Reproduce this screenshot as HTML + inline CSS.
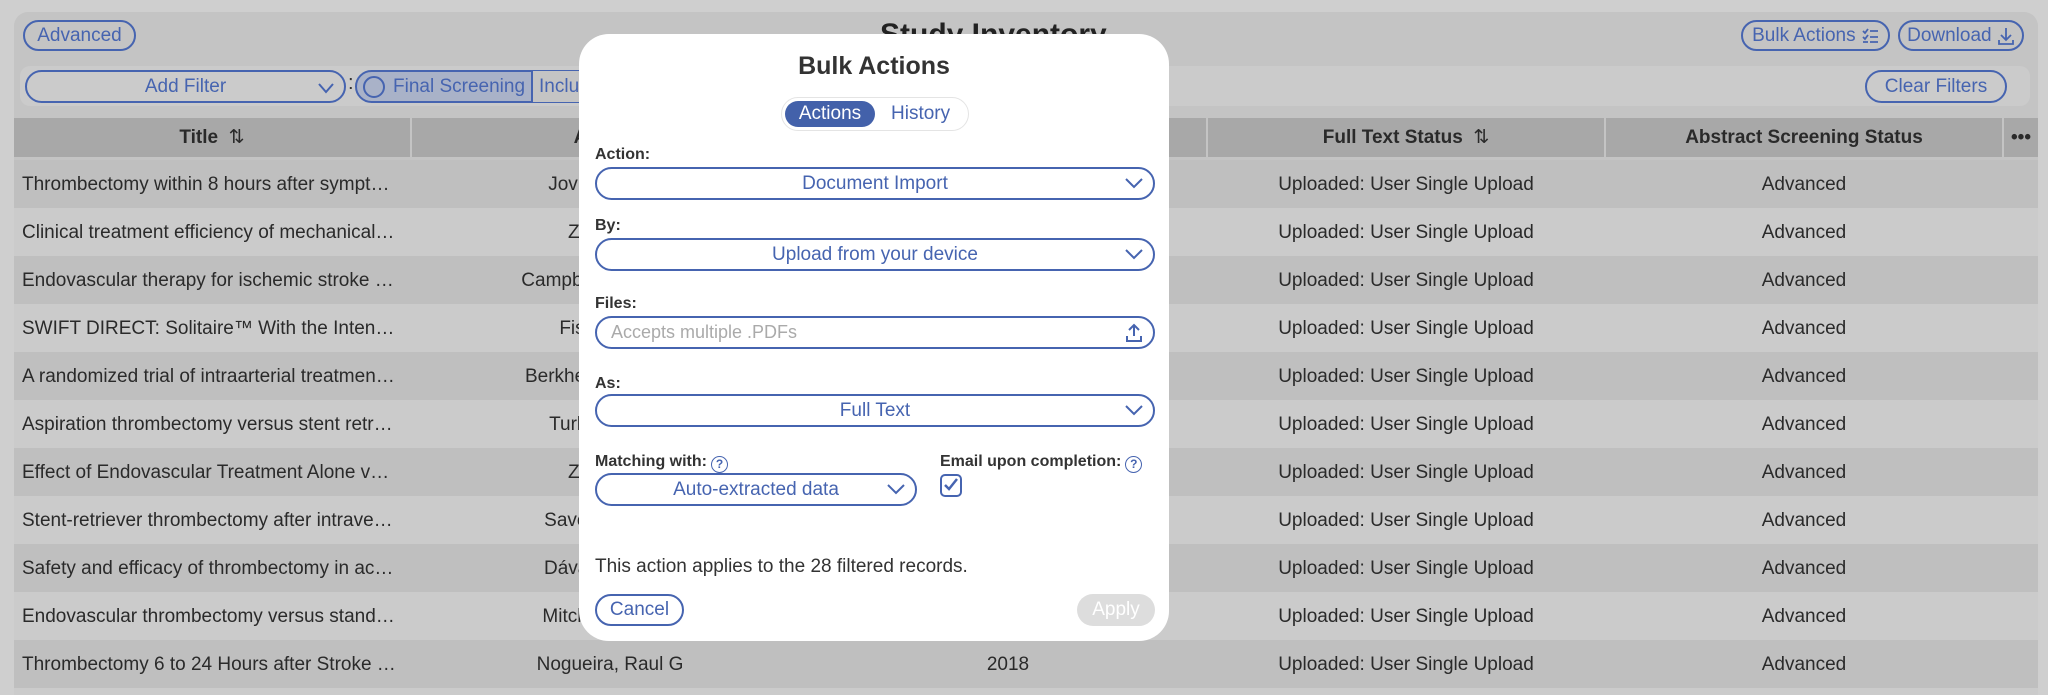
<!DOCTYPE html>
<html><head><meta charset="utf-8"><style>
*{box-sizing:border-box;margin:0;padding:0}
html,body{width:2048px;height:695px;overflow:hidden}
body{background:#cfcfcf;font-family:"Liberation Sans",sans-serif;position:relative}
.abs{position:absolute}
.panel{left:14px;top:12px;width:2024px;height:683px;background:#c4c4c4;border-radius:14px 14px 0 0}
.btn{position:absolute;border:2px solid #4664b0;border-radius:18px;color:#4664b0;font-size:19px;display:flex;align-items:center;justify-content:center;background:transparent}
.hdr{position:absolute;top:118px;height:39px;background:#a8a8a8;font-weight:bold;font-size:19px;color:#2a2a2a;display:flex;align-items:center;justify-content:center}
.row{position:absolute;left:14px;width:2024px;height:48px;font-size:19px;color:#2a2a2a;overflow:hidden}
.row span{position:absolute;top:14px}
.c2,.c3,.c4,.c5{transform:translateX(-50%);white-space:nowrap}
.modal{left:579px;top:34px;width:590px;height:607px;background:#fff;border-radius:30px}
.lab{position:absolute;font-size:16px;font-weight:bold;color:#333}
.sel{position:absolute;left:16px;width:560px;height:33px;border:2px solid #4664b0;border-radius:17px;color:#4664b0;font-size:19px;display:flex;align-items:center;justify-content:center}
.chev{position:absolute;right:10px;top:8px}
.q{display:inline-block;width:17px;height:17px;border:1.5px solid #4664b0;border-radius:50%;color:#4664b0;font-size:12px;text-align:center;line-height:14px;vertical-align:-2px;margin-left:4px}
</style></head><body>
<div class="abs panel"></div>
<div class="btn" style="left:23px;top:20px;width:113px;height:31px">Advanced</div>
<div class="abs" style="left:880px;top:18px;font-size:30px;font-weight:bold;color:#222">Study Inventory</div>
<div class="btn" style="left:1741px;top:20px;width:149px;height:31px">Bulk Actions&nbsp;<svg width="18" height="18"><path d="M2 4l2 2 3-4M2 10l2 2 3-4M9 4h8M9 10h8M9 15h8M2 15h5" fill="none" stroke="#4664b0" stroke-width="1.8"/></svg></div>
<div class="btn" style="left:1898px;top:20px;width:126px;height:31px">Download&nbsp;<svg width="18" height="20"><path d="M9 2v12M4 9l5 5 5-5M2 14v4h14v-4" fill="none" stroke="#4664b0" stroke-width="1.8"/></svg></div>
<div class="abs" style="left:20px;top:66px;width:2010px;height:40px;background:#cbcbcb;border-radius:10px"></div>
<div class="btn" style="left:25px;top:70px;width:321px;height:33px">Add Filter<svg class="chev" width="16" height="12" style="right:10px;top:10px"><path d="M1 2l7 8 7-8" fill="none" stroke="#4664b0" stroke-width="2"/></svg></div>
<div class="abs" style="left:348px;top:72px;font-size:20px;color:#333">:</div>
<div class="btn" style="left:355px;top:70px;width:240px;height:33px;justify-content:flex-start;background:#a9b2c8;border-radius:17px 0 0 17px;padding-left:6px"><span style="width:22px;height:22px;border:2px solid #4664b0;border-radius:50%;margin-right:8px"></span>Final Screening<span style="border-left:2px solid #4664b0;height:31px;margin-left:6px;padding-left:6px;line-height:31px;background:#c4c4c4">Inclu</span></div>
<div class="btn" style="left:1865px;top:70px;width:142px;height:33px">Clear Filters</div>

<div class="hdr" style="left:14px;width:396px">Title &nbsp;<span style="font-weight:normal">⇅</span></div>
<div class="hdr" style="left:412px;width:396px">Authors</div>
<div class="hdr" style="left:810px;width:396px">Year</div>
<div class="hdr" style="left:1208px;width:396px">Full Text Status &nbsp;<span style="font-weight:normal">⇅</span></div>
<div class="hdr" style="left:1606px;width:396px">Abstract Screening Status</div>
<div class="hdr" style="left:2004px;width:34px">•••</div>

<div id="rows"></div>
<script>
var t=["Thrombectomy within 8 hours after sympt…","Clinical treatment efficiency of mechanical…","Endovascular therapy for ischemic stroke …","SWIFT DIRECT: Solitaire™ With the Inten…","A randomized trial of intraarterial treatmen…","Aspiration thrombectomy versus stent retr…","Effect of Endovascular Treatment Alone v…","Stent-retriever thrombectomy after intrave…","Safety and efficacy of thrombectomy in ac…","Endovascular thrombectomy versus stand…","Thrombectomy 6 to 24 Hours after Stroke …",""];
var a=["Jovin, Tudor G","Zi, Wenjie","Campbell, Bruce C V","Fischer, Urs","Berkhemer, Olvert A","Turk, Aquilla S","Zi, Wenjie","Saver, Jeffrey L","Dávalos, Antoni","Mitchell, Peter J","Nogueira, Raul G",""];
var h="";for(var i=0;i<12;i++){h+='<div class="row" style="top:'+(160+i*48)+'px;height:'+(i==11?7:48)+'px;background:'+(i%2?'#cbcbcb':'#bfbfbf')+'">'+(t[i]?'<span style="left:8px">'+t[i]+'</span><span class="c2" style="left:596px">'+a[i]+'</span><span class="c3" style="left:994px">2018</span><span class="c4" style="left:1392px">Uploaded: User Single Upload</span><span class="c5" style="left:1790px">Advanced</span>':'')+'</div>';}
document.getElementById('rows').innerHTML=h;
</script>

<div class="abs modal">
<div class="abs" style="left:0;width:590px;top:18px;text-align:center;font-size:25px;font-weight:bold;color:#333">Bulk Actions</div>
<div class="abs" style="left:202px;top:63px;width:188px;height:34px;border:1px solid #e4e4e4;border-radius:17px"></div>
<div class="abs" style="left:206px;top:67px;width:90px;height:26px;background:#4361aa;border-radius:13px;color:#fff;font-size:19px;text-align:center;line-height:26px">Actions</div>
<div class="abs" style="left:312px;top:67px;color:#4664b0;font-size:19px;line-height:26px">History</div>
<div class="lab" style="left:16px;top:112px">Action:</div>
<div class="sel" style="top:133px">Document Import<svg class="chev" width="18" height="12"><path d="M1 2l8 8 8-8" fill="none" stroke="#4664b0" stroke-width="2"/></svg></div>
<div class="lab" style="left:16px;top:183px">By:</div>
<div class="sel" style="top:204px">Upload from your device<svg class="chev" width="18" height="12"><path d="M1 2l8 8 8-8" fill="none" stroke="#4664b0" stroke-width="2"/></svg></div>
<div class="lab" style="left:16px;top:261px">Files:</div>
<div class="sel" style="top:282px;justify-content:flex-start;padding-left:14px;color:#aaa;font-size:18px">Accepts multiple .PDFs<svg class="chev" width="18" height="20" style="top:5px"><path d="M9 13V2M4 7l5-5 5 5M2 13v5h14v-5" fill="none" stroke="#4664b0" stroke-width="2"/></svg></div>
<div class="lab" style="left:16px;top:341px">As:</div>
<div class="sel" style="top:360px">Full Text<svg class="chev" width="18" height="12"><path d="M1 2l8 8 8-8" fill="none" stroke="#4664b0" stroke-width="2"/></svg></div>
<div class="lab" style="left:16px;top:419px">Matching with:<span class="q">?</span></div>
<div class="sel" style="top:439px;width:322px">Auto-extracted data<svg class="chev" width="18" height="12"><path d="M1 2l8 8 8-8" fill="none" stroke="#4664b0" stroke-width="2"/></svg></div>
<div class="lab" style="left:361px;top:419px">Email upon completion:<span class="q">?</span></div>
<div class="abs" style="left:361px;top:440px;width:22px;height:23px;border:2px solid #4664b0;border-radius:5px"><svg width="18" height="18"><path d="M3 9l4 4 8-10" fill="none" stroke="#4664b0" stroke-width="2.5"/></svg></div>
<div class="abs" style="left:16px;top:522px;font-size:19px;color:#333">This action applies to the 28 filtered records.</div>
<div class="btn" style="left:16px;top:560px;width:89px;height:32px">Cancel</div>
<div class="abs" style="left:498px;top:560px;width:78px;height:32px;background:#ddd;border-radius:16px;color:#fff;font-size:19px;text-align:center;line-height:32px">Apply</div>
</div>
</body></html>
